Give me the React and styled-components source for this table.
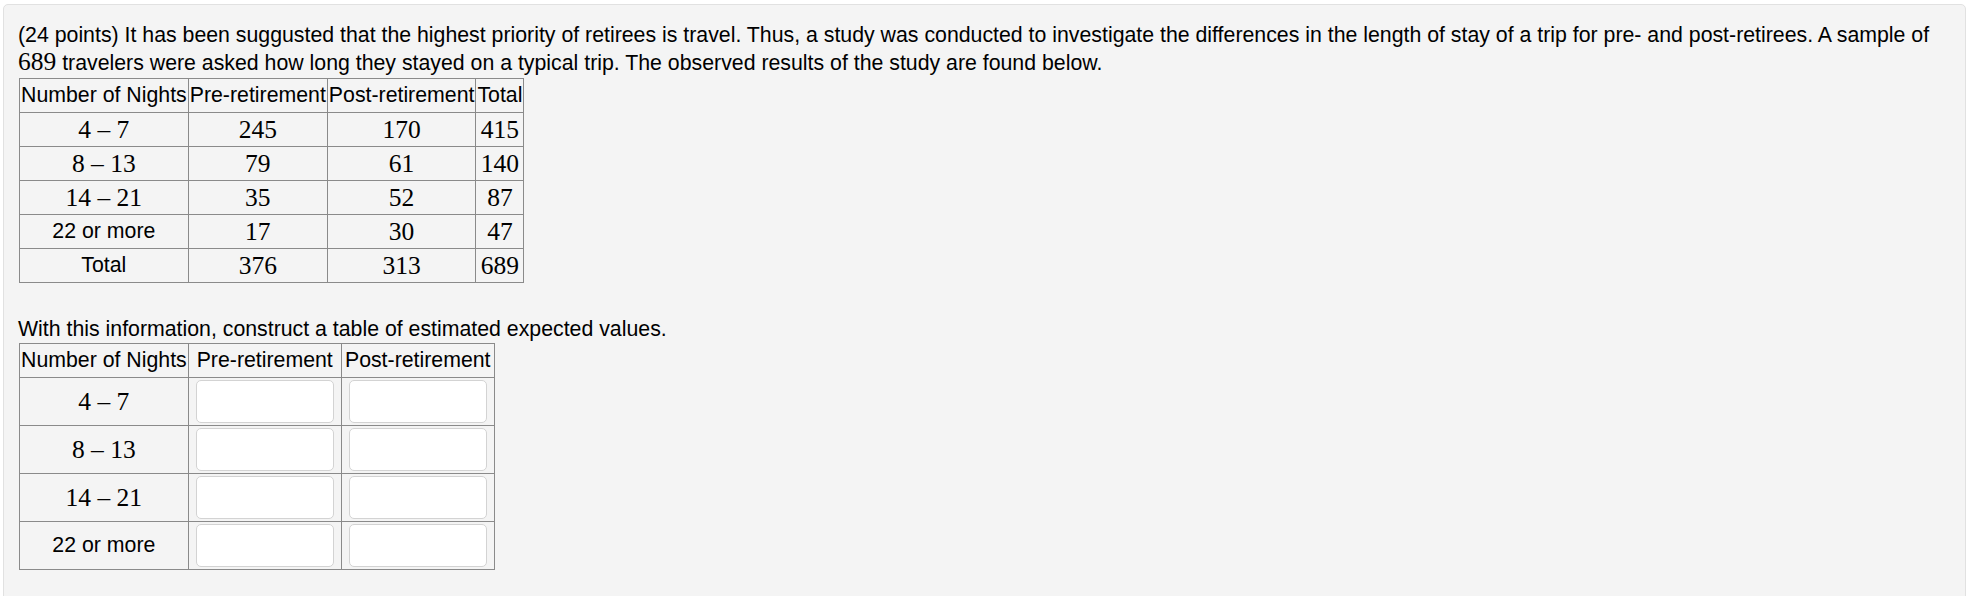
import React from 'react';
import styled, { createGlobalStyle } from 'styled-components';

const GlobalStyle = createGlobalStyle`
  body {
    margin: 0;
    background: #ffffff;
    font-family: "Liberation Sans", Arial, sans-serif;
    color: #000;
  }
`;

const observed = [
  { label: '4 – 7', math: true, pre: 245, post: 170, total: 415 },
  { label: '8 – 13', math: true, pre: 79, post: 61, total: 140 },
  { label: '14 – 21', math: true, pre: 35, post: 52, total: 87 },
  { label: '22 or more', math: false, pre: 17, post: 30, total: 47 },
  { label: 'Total', math: false, pre: 376, post: 313, total: 689 },
];

const expectedRows = [
  { label: '4 – 7', math: true },
  { label: '8 – 13', math: true },
  { label: '14 – 21', math: true },
  { label: '22 or more', math: false },
];

const App = () => {
  return (
    <>
      <GlobalStyle />
      <Panel>
        <Prompt>
          (24 points) It has been suggusted that the highest priority of retirees is travel. Thus, a study was
          conducted to investigate the differences in the length of stay of a trip for pre- and post-retirees. A
          sample of <MathNum>689</MathNum> travelers were asked how long they stayed on a typical trip. The
          observed results of the study are found below.
        </Prompt>

        <DataTable>
          <tbody>
            <tr>
              <HeadCell>Number of Nights</HeadCell>
              <HeadCell>Pre-retirement</HeadCell>
              <HeadCell>Post-retirement</HeadCell>
              <HeadCell>Total</HeadCell>
            </tr>
            {observed.map((row) => (
              <tr key={row.label}>
                <Cell $math={row.math}>{row.label}</Cell>
                <Cell $math>{row.pre}</Cell>
                <Cell $math>{row.post}</Cell>
                <Cell $math>{row.total}</Cell>
              </tr>
            ))}
          </tbody>
        </DataTable>

        <Question>With this information, construct a table of estimated expected values.</Question>

        <DataTable>
          <tbody>
            <tr>
              <HeadCell>Number of Nights</HeadCell>
              <HeadCell $pad>Pre-retirement</HeadCell>
              <HeadCell $pad>Post-retirement</HeadCell>
            </tr>
            {expectedRows.map((row) => (
              <tr key={row.label}>
                <Cell $math={row.math}>{row.label}</Cell>
                <InputCell>
                  <AnswerInput type="text" />
                </InputCell>
                <InputCell>
                  <AnswerInput type="text" />
                </InputCell>
              </tr>
            ))}
          </tbody>
        </DataTable>
      </Panel>
    </>
  );
};

const Panel = styled.div`
  margin: 4px 0 0 3px;
  width: 1963px;
  min-height: 640px;
  box-sizing: border-box;
  padding: 16px 14px 20px 14px;
  background-color: #f4f4f4;
  border: 1px solid #e1e1e1;
  border-radius: 5px;
`;

const Prompt = styled.p`
  margin: 0 0 1px 0;
  font-size: 21.3px;
  line-height: 28px;
`;

const MathNum = styled.span`
  font-family: "Liberation Serif", "Times New Roman", serif;
  font-size: 25.5px;
  line-height: 0;
`;

const Question = styled.p`
  margin: 32px 0 0 0;
  font-size: 21.3px;
  line-height: 28px;
`;

const DataTable = styled.table`
  border-collapse: collapse;
  margin-left: 1px;
  border: 1px solid #8a8a8a;
`;

const HeadCell = styled.td`
  border: 1px solid #8a8a8a;
  padding: 4px ${(p) => (p.$pad ? '3px' : '1px')};
  font-size: 21.3px;
  line-height: 25px;
  text-align: center;
  white-space: nowrap;
`;

const Cell = styled.td`
  border: 1px solid #8a8a8a;
  padding: 4px 1px;
  text-align: center;
  white-space: nowrap;
  line-height: 25px;
  font-size: ${(p) => (p.$math ? '25.5px' : '21.3px')};
  font-family: ${(p) =>
    p.$math ? '"Liberation Serif", "Times New Roman", serif' : '"Liberation Sans", Arial, sans-serif'};
`;

const InputCell = styled.td`
  border: 1px solid #8a8a8a;
  padding: 2px 7px 2px 7px;
`;

const AnswerInput = styled.input`
  display: block;
  box-sizing: border-box;
  width: 138px;
  height: 43px;
  margin: 0;
  border: 1px solid #d3d3d3;
  border-radius: 5px;
  background: #ffffff;
  font-size: 18px;
  font-family: "Liberation Sans", Arial, sans-serif;
`;

export default App;
